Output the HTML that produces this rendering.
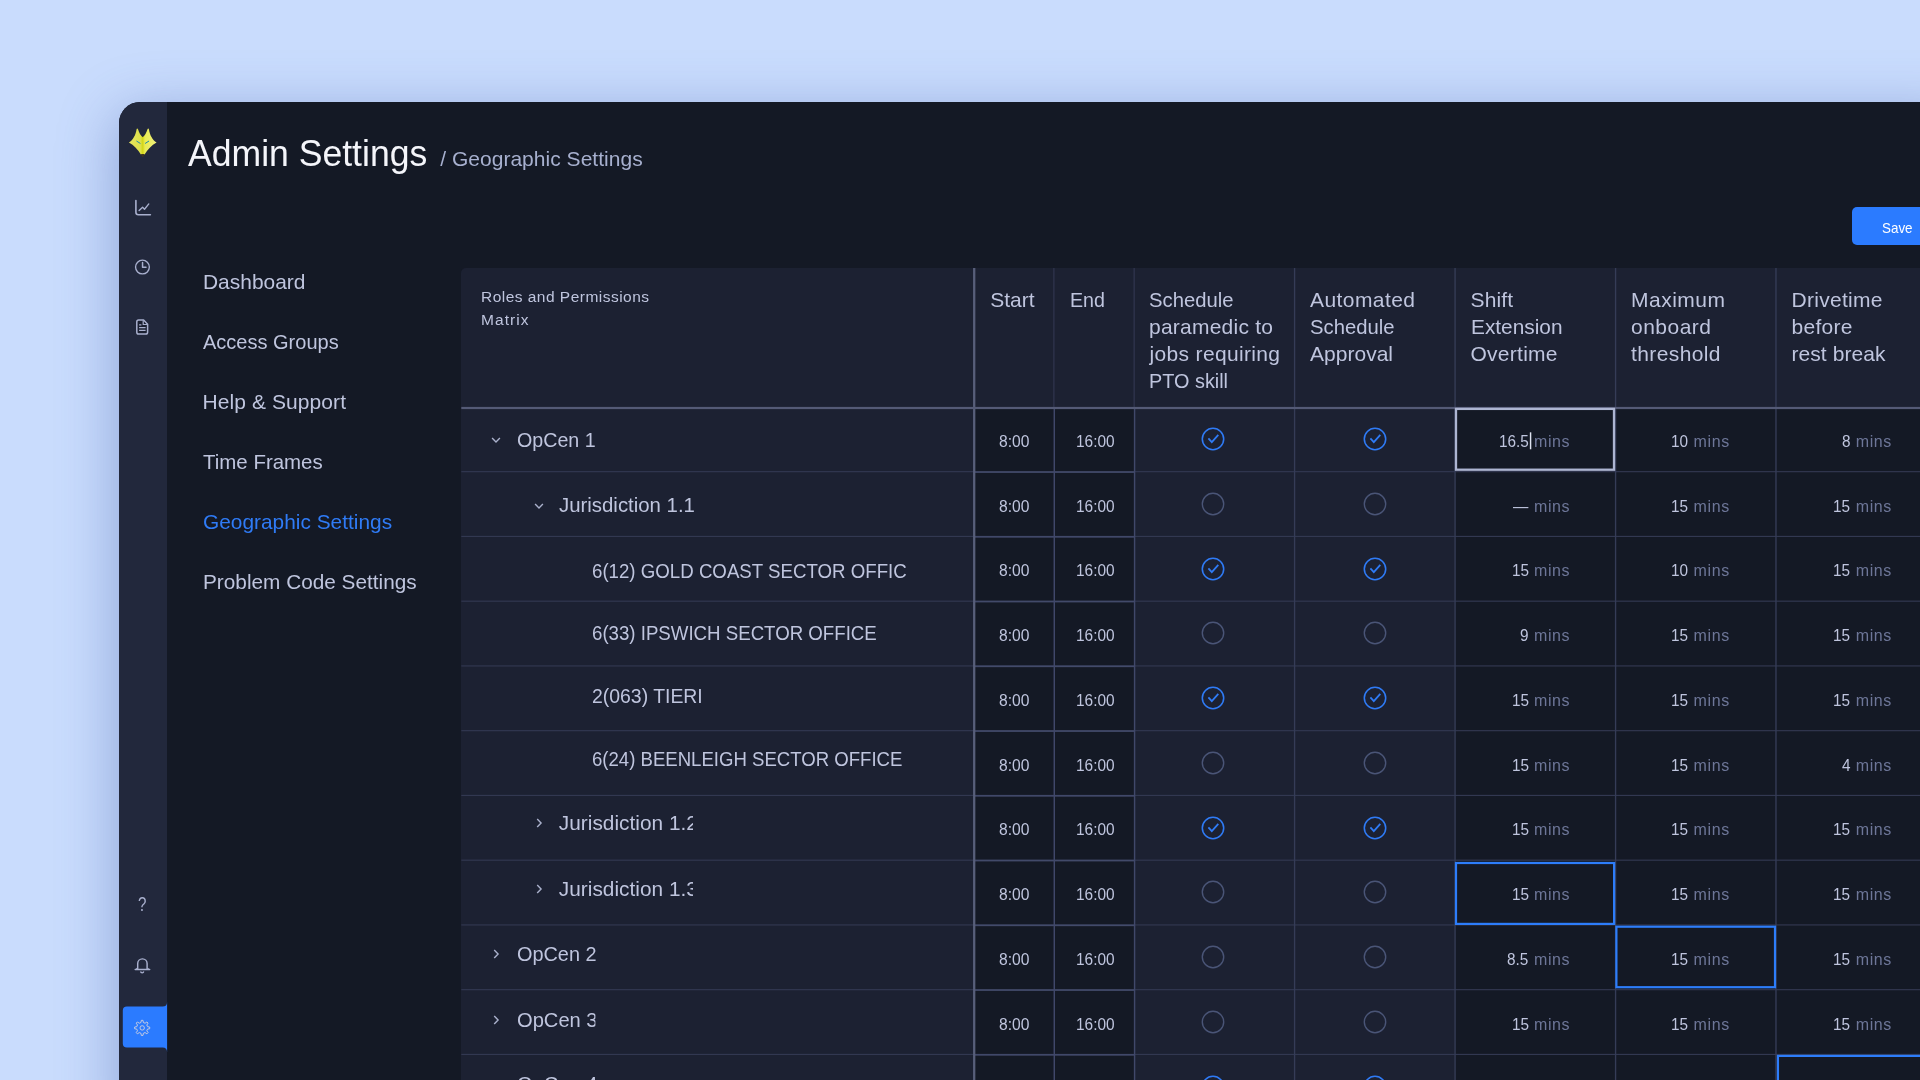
<!DOCTYPE html>
<html><head><meta charset="utf-8"><title>Admin Settings</title>
<style>
html,body{margin:0;padding:0;}
body{width:1920px;height:1080px;overflow:hidden;position:relative;background:#c9dcfd;font-family:"Liberation Sans",sans-serif;}
#root{position:absolute;left:0;top:0;width:1920px;height:1080px;overflow:hidden;will-change:transform;}
.t{position:absolute;white-space:nowrap;}
.r{position:absolute;}
.ic{position:absolute;overflow:visible;}
</style></head><body>
<div id="root">
<div class="r" style="left:119.00px;top:102.00px;width:1841.00px;height:1018.00px;background:#141925;border-radius:21px 0 0 0;box-shadow:0 14px 56px 4px rgba(66,92,170,0.40);"></div>
<div class="r" style="left:119.00px;top:102.00px;width:48.10px;height:988.00px;background:#22283c;border-radius:21px 0 0 0;"></div>
<div class="t " style="left:187.60px;top:136px;font-size:36px;line-height:36px;color:#f4f5fa;transform:scaleX(0.9882);transform-origin:0 0;">Admin Settings</div>
<div class="t " style="left:440.20px;top:148px;font-size:21px;line-height:21px;color:#a7b0cf;letter-spacing:0.027px;">/ Geographic Settings</div>
<div class="t " style="left:202.60px;top:271px;font-size:21px;line-height:21px;color:#bfc5de;transform:scaleX(0.9970);transform-origin:0 0;">Dashboard</div>
<div class="t " style="left:202.60px;top:331px;font-size:21px;line-height:21px;color:#bfc5de;transform:scaleX(0.9529);transform-origin:0 0;">Access Groups</div>
<div class="t " style="left:202.60px;top:391px;font-size:21px;line-height:21px;color:#bfc5de;letter-spacing:0.076px;">Help &amp; Support</div>
<div class="t " style="left:202.60px;top:451px;font-size:21px;line-height:21px;color:#bfc5de;transform:scaleX(0.9741);transform-origin:0 0;">Time Frames</div>
<div class="t " style="left:202.60px;top:511px;font-size:21px;line-height:21px;color:#2f7bf6;transform:scaleX(0.9936);transform-origin:0 0;">Geographic Settings</div>
<div class="t " style="left:202.60px;top:571px;font-size:21px;line-height:21px;color:#bfc5de;transform:scaleX(0.9894);transform-origin:0 0;">Problem Code Settings</div>
<div class="r" style="left:1852.00px;top:207.00px;width:80.00px;height:38.30px;background:#2b7bff;border-radius:5px;"></div>
<div class="t " style="left:1882.40px;top:221px;font-size:14.5px;line-height:14.5px;color:#ffffff;transform:scaleX(0.9251);transform-origin:0 0;">Save</div>
<div class="r" style="left:461.30px;top:268.00px;width:1468.70px;height:822.00px;background:#1c2132;border-radius:5px 0 0 0;"></div>
<div class="t " style="left:481.00px;top:289px;font-size:15.5px;line-height:15.5px;color:#bfc5de;letter-spacing:0.474px;">Roles and Permissions</div>
<div class="t " style="left:481.00px;top:312px;font-size:15.5px;line-height:15.5px;color:#bfc5de;letter-spacing:1.060px;">Matrix</div>
<div class="r" style="left:974.20px;top:408.00px;width:160.00px;height:700.00px;background:#141925;"></div>
<div class="r" style="left:1455.10px;top:408.00px;width:600.00px;height:700.00px;background:#141925;"></div>
<div class="t " style="left:990.20px;top:289px;font-size:21px;line-height:21px;color:#bfc5de;letter-spacing:0.030px;">Start</div>
<div class="t " style="left:1069.50px;top:289px;font-size:21px;line-height:21px;color:#bfc5de;transform:scaleX(0.9357);transform-origin:0 0;">End</div>
<div class="t " style="left:1149.00px;top:289px;font-size:21px;line-height:21px;color:#bfc5de;transform:scaleX(0.9645);transform-origin:0 0;">Schedule</div>
<div class="t " style="left:1149.00px;top:316px;font-size:21px;line-height:21px;color:#bfc5de;letter-spacing:0.236px;">paramedic to</div>
<div class="t " style="left:1149.57px;top:343px;font-size:21px;line-height:21px;color:#bfc5de;letter-spacing:0.334px;">jobs requiring</div>
<div class="t " style="left:1149.00px;top:370px;font-size:21px;line-height:21px;color:#bfc5de;transform:scaleX(0.9451);transform-origin:0 0;">PTO skill</div>
<div class="t " style="left:1310.00px;top:289px;font-size:21px;line-height:21px;color:#bfc5de;letter-spacing:0.431px;">Automated</div>
<div class="t " style="left:1310.00px;top:316px;font-size:21px;line-height:21px;color:#bfc5de;transform:scaleX(0.9645);transform-origin:0 0;">Schedule</div>
<div class="t " style="left:1310.00px;top:343px;font-size:21px;line-height:21px;color:#bfc5de;letter-spacing:0.021px;">Approval</div>
<div class="t " style="left:1470.50px;top:289px;font-size:21px;line-height:21px;color:#bfc5de;letter-spacing:0.125px;">Shift</div>
<div class="t " style="left:1470.50px;top:316px;font-size:21px;line-height:21px;color:#bfc5de;transform:scaleX(0.9924);transform-origin:0 0;">Extension</div>
<div class="t " style="left:1470.50px;top:343px;font-size:21px;line-height:21px;color:#bfc5de;letter-spacing:0.265px;">Overtime</div>
<div class="t " style="left:1631.00px;top:289px;font-size:21px;line-height:21px;color:#bfc5de;letter-spacing:0.505px;">Maximum</div>
<div class="t " style="left:1631.00px;top:316px;font-size:21px;line-height:21px;color:#bfc5de;letter-spacing:0.482px;">onboard</div>
<div class="t " style="left:1631.00px;top:343px;font-size:21px;line-height:21px;color:#bfc5de;letter-spacing:0.390px;">threshold</div>
<div class="t " style="left:1791.50px;top:289px;font-size:21px;line-height:21px;color:#bfc5de;letter-spacing:0.291px;">Drivetime</div>
<div class="t " style="left:1791.50px;top:316px;font-size:21px;line-height:21px;color:#bfc5de;letter-spacing:0.289px;">before</div>
<div class="t " style="left:1791.50px;top:343px;font-size:21px;line-height:21px;color:#bfc5de;letter-spacing:0.063px;">rest break</div>
<svg class="ic" style="left:0;top:0" width="1920" height="1080" viewBox="0 0 1920 1080"><rect x="461.30" y="471.10" width="1500.00" height="1.15" fill="#323851"/><rect x="974.20" y="471.30" width="160.60" height="1.60" fill="#424a6a"/><rect x="461.30" y="535.85" width="1500.00" height="1.15" fill="#323851"/><rect x="974.20" y="536.05" width="160.60" height="1.60" fill="#424a6a"/><rect x="461.30" y="600.60" width="1500.00" height="1.15" fill="#323851"/><rect x="974.20" y="600.80" width="160.60" height="1.60" fill="#424a6a"/><rect x="461.30" y="665.35" width="1500.00" height="1.15" fill="#323851"/><rect x="974.20" y="665.55" width="160.60" height="1.60" fill="#424a6a"/><rect x="461.30" y="730.10" width="1500.00" height="1.15" fill="#323851"/><rect x="974.20" y="730.30" width="160.60" height="1.60" fill="#424a6a"/><rect x="461.30" y="794.85" width="1500.00" height="1.15" fill="#323851"/><rect x="974.20" y="795.05" width="160.60" height="1.60" fill="#424a6a"/><rect x="461.30" y="859.60" width="1500.00" height="1.15" fill="#323851"/><rect x="974.20" y="859.80" width="160.60" height="1.60" fill="#424a6a"/><rect x="461.30" y="924.35" width="1500.00" height="1.15" fill="#323851"/><rect x="974.20" y="924.55" width="160.60" height="1.60" fill="#424a6a"/><rect x="461.30" y="989.10" width="1500.00" height="1.15" fill="#323851"/><rect x="974.20" y="989.30" width="160.60" height="1.60" fill="#424a6a"/><rect x="461.30" y="1053.85" width="1500.00" height="1.15" fill="#323851"/><rect x="974.20" y="1054.05" width="160.60" height="1.60" fill="#424a6a"/><rect x="461.30" y="1118.60" width="1500.00" height="1.15" fill="#323851"/><rect x="974.20" y="1118.80" width="160.60" height="1.60" fill="#424a6a"/><rect x="1293.90" y="268.00" width="1.35" height="900.00" fill="#353c57"/><rect x="1454.40" y="268.00" width="1.35" height="900.00" fill="#353c57"/><rect x="1614.90" y="268.00" width="1.35" height="900.00" fill="#353c57"/><rect x="1775.30" y="268.00" width="1.35" height="900.00" fill="#353c57"/><rect x="1053.20" y="268.00" width="1.35" height="140.00" fill="#2e344c"/><rect x="1053.55" y="408.00" width="1.45" height="900.00" fill="#40486a"/><rect x="1133.50" y="268.00" width="1.35" height="140.00" fill="#2e344c"/><rect x="1133.85" y="408.00" width="1.45" height="900.00" fill="#40486a"/><rect x="973.05" y="268.00" width="2.30" height="900.00" fill="#585f7a"/><rect x="461.30" y="406.90" width="1500.00" height="2.20" fill="#545a76"/></svg>
<!--ROWS-->
<div class="t " style="left:516.70px;top:430px;font-size:20.8px;line-height:20.8px;color:#bfc5de;transform:scaleX(0.9450);transform-origin:0 0;">OpCen 1</div>
<svg class="ic" style="left:489.90px;top:433.80px" width="12" height="12" viewBox="0 0 12 12"><path d="M2.1 4.1 L6 8.0 L9.9 4.1" fill="none" stroke="#aab1cc" stroke-width="1.4"/></svg>
<div class="t " style="left:998.90px;top:434px;font-size:16px;line-height:16px;color:#bfc5de;transform:scaleX(0.9767);transform-origin:0 0;">8:00</div>
<div class="t " style="left:1075.90px;top:434px;font-size:16px;line-height:16px;color:#bfc5de;transform:scaleX(0.9635);transform-origin:0 0;">16:00</div>
<svg class="ic" style="left:1200.95px;top:427.20px" width="24" height="24" viewBox="0 0 24 24"><circle cx="12" cy="12" r="10.7" fill="none" stroke="#2f7bf6" stroke-width="1.55"/><path d="M7.4 11.4 L10.8 15.2 L17.3 7.8" fill="none" stroke="#2f7bf6" stroke-width="1.75"/></svg>
<svg class="ic" style="left:1362.50px;top:427.20px" width="24" height="24" viewBox="0 0 24 24"><circle cx="12" cy="12" r="10.7" fill="none" stroke="#2f7bf6" stroke-width="1.55"/><path d="M7.4 11.4 L10.8 15.2 L17.3 7.8" fill="none" stroke="#2f7bf6" stroke-width="1.75"/></svg>
<div class="t " style="left:1534.00px;top:434px;font-size:16px;line-height:16px;color:#6d7698;letter-spacing:0.596px;">mins</div>
<div class="t " style="left:1499.08px;top:434px;font-size:16px;line-height:16px;color:#bfc5de;transform:scaleX(0.9580);transform-origin:0 0;">16.5</div>
<div class="t " style="left:1693.60px;top:434px;font-size:16px;line-height:16px;color:#6d7698;letter-spacing:0.596px;">mins</div>
<div class="t " style="left:1671.14px;top:434px;font-size:16px;line-height:16px;color:#bfc5de;transform:scaleX(0.9580);transform-origin:0 0;">10</div>
<div class="t " style="left:1855.80px;top:434px;font-size:16px;line-height:16px;color:#6d7698;letter-spacing:0.596px;">mins</div>
<div class="t " style="left:1841.90px;top:434px;font-size:16px;line-height:16px;color:#bfc5de;transform:scaleX(0.9580);transform-origin:0 0;">8</div>
<div class="t " style="left:559.10px;top:495px;font-size:20.8px;line-height:20.8px;color:#bfc5de;transform:scaleX(0.9800);transform-origin:0 0;">Jurisdiction 1.1</div>
<svg class="ic" style="left:533.20px;top:499.80px" width="12" height="12" viewBox="0 0 12 12"><path d="M2.1 4.1 L6 8.0 L9.9 4.1" fill="none" stroke="#aab1cc" stroke-width="1.4"/></svg>
<div class="t " style="left:998.90px;top:499px;font-size:16px;line-height:16px;color:#bfc5de;transform:scaleX(0.9767);transform-origin:0 0;">8:00</div>
<div class="t " style="left:1075.90px;top:499px;font-size:16px;line-height:16px;color:#bfc5de;transform:scaleX(0.9635);transform-origin:0 0;">16:00</div>
<svg class="ic" style="left:1200.95px;top:491.95px" width="24" height="24" viewBox="0 0 24 24"><circle cx="12" cy="12" r="10.7" fill="none" stroke="#4a5577" stroke-width="1.4"/></svg>
<svg class="ic" style="left:1362.50px;top:491.95px" width="24" height="24" viewBox="0 0 24 24"><circle cx="12" cy="12" r="10.7" fill="none" stroke="#4a5577" stroke-width="1.4"/></svg>
<div class="t " style="left:1534.00px;top:499px;font-size:16px;line-height:16px;color:#6d7698;letter-spacing:0.596px;">mins</div>
<div class="t " style="left:1513.27px;top:499px;font-size:16px;line-height:16px;color:#bfc5de;transform:scaleX(0.9580);transform-origin:0 0;">—</div>
<div class="t " style="left:1693.60px;top:499px;font-size:16px;line-height:16px;color:#6d7698;letter-spacing:0.596px;">mins</div>
<div class="t " style="left:1671.14px;top:499px;font-size:16px;line-height:16px;color:#bfc5de;transform:scaleX(0.9580);transform-origin:0 0;">15</div>
<div class="t " style="left:1855.80px;top:499px;font-size:16px;line-height:16px;color:#6d7698;letter-spacing:0.596px;">mins</div>
<div class="t " style="left:1833.34px;top:499px;font-size:16px;line-height:16px;color:#bfc5de;transform:scaleX(0.9580);transform-origin:0 0;">15</div>
<div class="t " style="left:592.20px;top:561px;font-size:20.8px;line-height:20.8px;color:#bfc5de;transform:scaleX(0.8979);transform-origin:0 0;">6(12) GOLD COAST SECTOR OFFIC</div>
<div class="t " style="left:998.90px;top:563px;font-size:16px;line-height:16px;color:#bfc5de;transform:scaleX(0.9767);transform-origin:0 0;">8:00</div>
<div class="t " style="left:1075.90px;top:563px;font-size:16px;line-height:16px;color:#bfc5de;transform:scaleX(0.9635);transform-origin:0 0;">16:00</div>
<svg class="ic" style="left:1200.95px;top:556.70px" width="24" height="24" viewBox="0 0 24 24"><circle cx="12" cy="12" r="10.7" fill="none" stroke="#2f7bf6" stroke-width="1.55"/><path d="M7.4 11.4 L10.8 15.2 L17.3 7.8" fill="none" stroke="#2f7bf6" stroke-width="1.75"/></svg>
<svg class="ic" style="left:1362.50px;top:556.70px" width="24" height="24" viewBox="0 0 24 24"><circle cx="12" cy="12" r="10.7" fill="none" stroke="#2f7bf6" stroke-width="1.55"/><path d="M7.4 11.4 L10.8 15.2 L17.3 7.8" fill="none" stroke="#2f7bf6" stroke-width="1.75"/></svg>
<div class="t " style="left:1534.00px;top:563px;font-size:16px;line-height:16px;color:#6d7698;letter-spacing:0.596px;">mins</div>
<div class="t " style="left:1511.54px;top:563px;font-size:16px;line-height:16px;color:#bfc5de;transform:scaleX(0.9580);transform-origin:0 0;">15</div>
<div class="t " style="left:1693.60px;top:563px;font-size:16px;line-height:16px;color:#6d7698;letter-spacing:0.596px;">mins</div>
<div class="t " style="left:1671.14px;top:563px;font-size:16px;line-height:16px;color:#bfc5de;transform:scaleX(0.9580);transform-origin:0 0;">10</div>
<div class="t " style="left:1855.80px;top:563px;font-size:16px;line-height:16px;color:#6d7698;letter-spacing:0.596px;">mins</div>
<div class="t " style="left:1833.34px;top:563px;font-size:16px;line-height:16px;color:#bfc5de;transform:scaleX(0.9580);transform-origin:0 0;">15</div>
<div class="t " style="left:592.20px;top:623px;font-size:20.8px;line-height:20.8px;color:#bfc5de;transform:scaleX(0.8972);transform-origin:0 0;">6(33) IPSWICH SECTOR OFFICE</div>
<div class="t " style="left:998.90px;top:628px;font-size:16px;line-height:16px;color:#bfc5de;transform:scaleX(0.9767);transform-origin:0 0;">8:00</div>
<div class="t " style="left:1075.90px;top:628px;font-size:16px;line-height:16px;color:#bfc5de;transform:scaleX(0.9635);transform-origin:0 0;">16:00</div>
<svg class="ic" style="left:1200.95px;top:621.45px" width="24" height="24" viewBox="0 0 24 24"><circle cx="12" cy="12" r="10.7" fill="none" stroke="#4a5577" stroke-width="1.4"/></svg>
<svg class="ic" style="left:1362.50px;top:621.45px" width="24" height="24" viewBox="0 0 24 24"><circle cx="12" cy="12" r="10.7" fill="none" stroke="#4a5577" stroke-width="1.4"/></svg>
<div class="t " style="left:1534.00px;top:628px;font-size:16px;line-height:16px;color:#6d7698;letter-spacing:0.596px;">mins</div>
<div class="t " style="left:1520.10px;top:628px;font-size:16px;line-height:16px;color:#bfc5de;transform:scaleX(0.9580);transform-origin:0 0;">9</div>
<div class="t " style="left:1693.60px;top:628px;font-size:16px;line-height:16px;color:#6d7698;letter-spacing:0.596px;">mins</div>
<div class="t " style="left:1671.14px;top:628px;font-size:16px;line-height:16px;color:#bfc5de;transform:scaleX(0.9580);transform-origin:0 0;">15</div>
<div class="t " style="left:1855.80px;top:628px;font-size:16px;line-height:16px;color:#6d7698;letter-spacing:0.596px;">mins</div>
<div class="t " style="left:1833.34px;top:628px;font-size:16px;line-height:16px;color:#bfc5de;transform:scaleX(0.9580);transform-origin:0 0;">15</div>
<div class="t " style="left:592.20px;top:686px;font-size:20.8px;line-height:20.8px;color:#bfc5de;transform:scaleX(0.9334);transform-origin:0 0;">2(063) TIERI</div>
<div class="t " style="left:998.90px;top:693px;font-size:16px;line-height:16px;color:#bfc5de;transform:scaleX(0.9767);transform-origin:0 0;">8:00</div>
<div class="t " style="left:1075.90px;top:693px;font-size:16px;line-height:16px;color:#bfc5de;transform:scaleX(0.9635);transform-origin:0 0;">16:00</div>
<svg class="ic" style="left:1200.95px;top:686.20px" width="24" height="24" viewBox="0 0 24 24"><circle cx="12" cy="12" r="10.7" fill="none" stroke="#2f7bf6" stroke-width="1.55"/><path d="M7.4 11.4 L10.8 15.2 L17.3 7.8" fill="none" stroke="#2f7bf6" stroke-width="1.75"/></svg>
<svg class="ic" style="left:1362.50px;top:686.20px" width="24" height="24" viewBox="0 0 24 24"><circle cx="12" cy="12" r="10.7" fill="none" stroke="#2f7bf6" stroke-width="1.55"/><path d="M7.4 11.4 L10.8 15.2 L17.3 7.8" fill="none" stroke="#2f7bf6" stroke-width="1.75"/></svg>
<div class="t " style="left:1534.00px;top:693px;font-size:16px;line-height:16px;color:#6d7698;letter-spacing:0.596px;">mins</div>
<div class="t " style="left:1511.54px;top:693px;font-size:16px;line-height:16px;color:#bfc5de;transform:scaleX(0.9580);transform-origin:0 0;">15</div>
<div class="t " style="left:1693.60px;top:693px;font-size:16px;line-height:16px;color:#6d7698;letter-spacing:0.596px;">mins</div>
<div class="t " style="left:1671.14px;top:693px;font-size:16px;line-height:16px;color:#bfc5de;transform:scaleX(0.9580);transform-origin:0 0;">15</div>
<div class="t " style="left:1855.80px;top:693px;font-size:16px;line-height:16px;color:#6d7698;letter-spacing:0.596px;">mins</div>
<div class="t " style="left:1833.34px;top:693px;font-size:16px;line-height:16px;color:#bfc5de;transform:scaleX(0.9580);transform-origin:0 0;">15</div>
<div class="t " style="left:592.20px;top:749px;font-size:20.8px;line-height:20.8px;color:#bfc5de;transform:scaleX(0.8932);transform-origin:0 0;">6(24) BEENLEIGH SECTOR OFFICE</div>
<div class="t " style="left:998.90px;top:758px;font-size:16px;line-height:16px;color:#bfc5de;transform:scaleX(0.9767);transform-origin:0 0;">8:00</div>
<div class="t " style="left:1075.90px;top:758px;font-size:16px;line-height:16px;color:#bfc5de;transform:scaleX(0.9635);transform-origin:0 0;">16:00</div>
<svg class="ic" style="left:1200.95px;top:750.95px" width="24" height="24" viewBox="0 0 24 24"><circle cx="12" cy="12" r="10.7" fill="none" stroke="#4a5577" stroke-width="1.4"/></svg>
<svg class="ic" style="left:1362.50px;top:750.95px" width="24" height="24" viewBox="0 0 24 24"><circle cx="12" cy="12" r="10.7" fill="none" stroke="#4a5577" stroke-width="1.4"/></svg>
<div class="t " style="left:1534.00px;top:758px;font-size:16px;line-height:16px;color:#6d7698;letter-spacing:0.596px;">mins</div>
<div class="t " style="left:1511.54px;top:758px;font-size:16px;line-height:16px;color:#bfc5de;transform:scaleX(0.9580);transform-origin:0 0;">15</div>
<div class="t " style="left:1693.60px;top:758px;font-size:16px;line-height:16px;color:#6d7698;letter-spacing:0.596px;">mins</div>
<div class="t " style="left:1671.14px;top:758px;font-size:16px;line-height:16px;color:#bfc5de;transform:scaleX(0.9580);transform-origin:0 0;">15</div>
<div class="t " style="left:1855.80px;top:758px;font-size:16px;line-height:16px;color:#6d7698;letter-spacing:0.596px;">mins</div>
<div class="t " style="left:1841.90px;top:758px;font-size:16px;line-height:16px;color:#bfc5de;transform:scaleX(0.9580);transform-origin:0 0;">4</div>
<div class="t " style="left:558.80px;top:813px;font-size:20.8px;line-height:20.8px;color:#bfc5de;letter-spacing:0.022px;width:134.60px;overflow:hidden;">Jurisdiction 1.2</div>
<svg class="ic" style="left:533.00px;top:817.10px" width="12" height="12" viewBox="0 0 12 12"><path d="M4.2 1.9 L8.1 6 L4.2 10.1" fill="none" stroke="#aab1cc" stroke-width="1.4"/></svg>
<div class="t " style="left:998.90px;top:822px;font-size:16px;line-height:16px;color:#bfc5de;transform:scaleX(0.9767);transform-origin:0 0;">8:00</div>
<div class="t " style="left:1075.90px;top:822px;font-size:16px;line-height:16px;color:#bfc5de;transform:scaleX(0.9635);transform-origin:0 0;">16:00</div>
<svg class="ic" style="left:1200.95px;top:815.70px" width="24" height="24" viewBox="0 0 24 24"><circle cx="12" cy="12" r="10.7" fill="none" stroke="#2f7bf6" stroke-width="1.55"/><path d="M7.4 11.4 L10.8 15.2 L17.3 7.8" fill="none" stroke="#2f7bf6" stroke-width="1.75"/></svg>
<svg class="ic" style="left:1362.50px;top:815.70px" width="24" height="24" viewBox="0 0 24 24"><circle cx="12" cy="12" r="10.7" fill="none" stroke="#2f7bf6" stroke-width="1.55"/><path d="M7.4 11.4 L10.8 15.2 L17.3 7.8" fill="none" stroke="#2f7bf6" stroke-width="1.75"/></svg>
<div class="t " style="left:1534.00px;top:822px;font-size:16px;line-height:16px;color:#6d7698;letter-spacing:0.596px;">mins</div>
<div class="t " style="left:1511.54px;top:822px;font-size:16px;line-height:16px;color:#bfc5de;transform:scaleX(0.9580);transform-origin:0 0;">15</div>
<div class="t " style="left:1693.60px;top:822px;font-size:16px;line-height:16px;color:#6d7698;letter-spacing:0.596px;">mins</div>
<div class="t " style="left:1671.14px;top:822px;font-size:16px;line-height:16px;color:#bfc5de;transform:scaleX(0.9580);transform-origin:0 0;">15</div>
<div class="t " style="left:1855.80px;top:822px;font-size:16px;line-height:16px;color:#6d7698;letter-spacing:0.596px;">mins</div>
<div class="t " style="left:1833.34px;top:822px;font-size:16px;line-height:16px;color:#bfc5de;transform:scaleX(0.9580);transform-origin:0 0;">15</div>
<div class="t " style="left:558.80px;top:879px;font-size:20.8px;line-height:20.8px;color:#bfc5de;letter-spacing:0.022px;width:134.60px;overflow:hidden;">Jurisdiction 1.3</div>
<svg class="ic" style="left:533.00px;top:882.80px" width="12" height="12" viewBox="0 0 12 12"><path d="M4.2 1.9 L8.1 6 L4.2 10.1" fill="none" stroke="#aab1cc" stroke-width="1.4"/></svg>
<div class="t " style="left:998.90px;top:887px;font-size:16px;line-height:16px;color:#bfc5de;transform:scaleX(0.9767);transform-origin:0 0;">8:00</div>
<div class="t " style="left:1075.90px;top:887px;font-size:16px;line-height:16px;color:#bfc5de;transform:scaleX(0.9635);transform-origin:0 0;">16:00</div>
<svg class="ic" style="left:1200.95px;top:880.45px" width="24" height="24" viewBox="0 0 24 24"><circle cx="12" cy="12" r="10.7" fill="none" stroke="#4a5577" stroke-width="1.4"/></svg>
<svg class="ic" style="left:1362.50px;top:880.45px" width="24" height="24" viewBox="0 0 24 24"><circle cx="12" cy="12" r="10.7" fill="none" stroke="#4a5577" stroke-width="1.4"/></svg>
<div class="t " style="left:1534.00px;top:887px;font-size:16px;line-height:16px;color:#6d7698;letter-spacing:0.596px;">mins</div>
<div class="t " style="left:1511.54px;top:887px;font-size:16px;line-height:16px;color:#bfc5de;transform:scaleX(0.9580);transform-origin:0 0;">15</div>
<div class="t " style="left:1693.60px;top:887px;font-size:16px;line-height:16px;color:#6d7698;letter-spacing:0.596px;">mins</div>
<div class="t " style="left:1671.14px;top:887px;font-size:16px;line-height:16px;color:#bfc5de;transform:scaleX(0.9580);transform-origin:0 0;">15</div>
<div class="t " style="left:1855.80px;top:887px;font-size:16px;line-height:16px;color:#6d7698;letter-spacing:0.596px;">mins</div>
<div class="t " style="left:1833.34px;top:887px;font-size:16px;line-height:16px;color:#bfc5de;transform:scaleX(0.9580);transform-origin:0 0;">15</div>
<div class="t " style="left:516.70px;top:944px;font-size:20.8px;line-height:20.8px;color:#bfc5de;transform:scaleX(0.9558);transform-origin:0 0;">OpCen 2</div>
<svg class="ic" style="left:489.60px;top:948.20px" width="12" height="12" viewBox="0 0 12 12"><path d="M4.2 1.9 L8.1 6 L4.2 10.1" fill="none" stroke="#aab1cc" stroke-width="1.4"/></svg>
<div class="t " style="left:998.90px;top:952px;font-size:16px;line-height:16px;color:#bfc5de;transform:scaleX(0.9767);transform-origin:0 0;">8:00</div>
<div class="t " style="left:1075.90px;top:952px;font-size:16px;line-height:16px;color:#bfc5de;transform:scaleX(0.9635);transform-origin:0 0;">16:00</div>
<svg class="ic" style="left:1200.95px;top:945.20px" width="24" height="24" viewBox="0 0 24 24"><circle cx="12" cy="12" r="10.7" fill="none" stroke="#4a5577" stroke-width="1.4"/></svg>
<svg class="ic" style="left:1362.50px;top:945.20px" width="24" height="24" viewBox="0 0 24 24"><circle cx="12" cy="12" r="10.7" fill="none" stroke="#4a5577" stroke-width="1.4"/></svg>
<div class="t " style="left:1534.00px;top:952px;font-size:16px;line-height:16px;color:#6d7698;letter-spacing:0.596px;">mins</div>
<div class="t " style="left:1507.28px;top:952px;font-size:16px;line-height:16px;color:#bfc5de;transform:scaleX(0.9580);transform-origin:0 0;">8.5</div>
<div class="t " style="left:1693.60px;top:952px;font-size:16px;line-height:16px;color:#6d7698;letter-spacing:0.596px;">mins</div>
<div class="t " style="left:1671.14px;top:952px;font-size:16px;line-height:16px;color:#bfc5de;transform:scaleX(0.9580);transform-origin:0 0;">15</div>
<div class="t " style="left:1855.80px;top:952px;font-size:16px;line-height:16px;color:#6d7698;letter-spacing:0.596px;">mins</div>
<div class="t " style="left:1833.34px;top:952px;font-size:16px;line-height:16px;color:#bfc5de;transform:scaleX(0.9580);transform-origin:0 0;">15</div>
<div class="t " style="left:516.70px;top:1010px;font-size:20.8px;line-height:20.8px;color:#bfc5de;transform:scaleX(0.9678);transform-origin:0 0;width:81.11px;overflow:hidden;">OpCen 3</div>
<svg class="ic" style="left:489.60px;top:1014.00px" width="12" height="12" viewBox="0 0 12 12"><path d="M4.2 1.9 L8.1 6 L4.2 10.1" fill="none" stroke="#aab1cc" stroke-width="1.4"/></svg>
<div class="t " style="left:998.90px;top:1017px;font-size:16px;line-height:16px;color:#bfc5de;transform:scaleX(0.9767);transform-origin:0 0;">8:00</div>
<div class="t " style="left:1075.90px;top:1017px;font-size:16px;line-height:16px;color:#bfc5de;transform:scaleX(0.9635);transform-origin:0 0;">16:00</div>
<svg class="ic" style="left:1200.95px;top:1009.95px" width="24" height="24" viewBox="0 0 24 24"><circle cx="12" cy="12" r="10.7" fill="none" stroke="#4a5577" stroke-width="1.4"/></svg>
<svg class="ic" style="left:1362.50px;top:1009.95px" width="24" height="24" viewBox="0 0 24 24"><circle cx="12" cy="12" r="10.7" fill="none" stroke="#4a5577" stroke-width="1.4"/></svg>
<div class="t " style="left:1534.00px;top:1017px;font-size:16px;line-height:16px;color:#6d7698;letter-spacing:0.596px;">mins</div>
<div class="t " style="left:1511.54px;top:1017px;font-size:16px;line-height:16px;color:#bfc5de;transform:scaleX(0.9580);transform-origin:0 0;">15</div>
<div class="t " style="left:1693.60px;top:1017px;font-size:16px;line-height:16px;color:#6d7698;letter-spacing:0.596px;">mins</div>
<div class="t " style="left:1671.14px;top:1017px;font-size:16px;line-height:16px;color:#bfc5de;transform:scaleX(0.9580);transform-origin:0 0;">15</div>
<div class="t " style="left:1855.80px;top:1017px;font-size:16px;line-height:16px;color:#6d7698;letter-spacing:0.596px;">mins</div>
<div class="t " style="left:1833.34px;top:1017px;font-size:16px;line-height:16px;color:#bfc5de;transform:scaleX(0.9580);transform-origin:0 0;">15</div>
<div class="t " style="left:516.70px;top:1074px;font-size:20.8px;line-height:20.8px;color:#bfc5de;transform:scaleX(0.9678);transform-origin:0 0;">OpCen 4</div>
<svg class="ic" style="left:489.60px;top:1079.00px" width="12" height="12" viewBox="0 0 12 12"><path d="M4.2 1.9 L8.1 6 L4.2 10.1" fill="none" stroke="#aab1cc" stroke-width="1.4"/></svg>
<div class="t " style="left:998.90px;top:1081px;font-size:16px;line-height:16px;color:#bfc5de;transform:scaleX(0.9767);transform-origin:0 0;">8:00</div>
<div class="t " style="left:1075.90px;top:1081px;font-size:16px;line-height:16px;color:#bfc5de;transform:scaleX(0.9635);transform-origin:0 0;">16:00</div>
<svg class="ic" style="left:1200.95px;top:1074.70px" width="24" height="24" viewBox="0 0 24 24"><circle cx="12" cy="12" r="10.7" fill="none" stroke="#2f7bf6" stroke-width="1.55"/><path d="M7.4 11.4 L10.8 15.2 L17.3 7.8" fill="none" stroke="#2f7bf6" stroke-width="1.75"/></svg>
<svg class="ic" style="left:1362.50px;top:1074.70px" width="24" height="24" viewBox="0 0 24 24"><circle cx="12" cy="12" r="10.7" fill="none" stroke="#2f7bf6" stroke-width="1.55"/><path d="M7.4 11.4 L10.8 15.2 L17.3 7.8" fill="none" stroke="#2f7bf6" stroke-width="1.75"/></svg>
<div class="t " style="left:1534.00px;top:1081px;font-size:16px;line-height:16px;color:#6d7698;letter-spacing:0.596px;">mins</div>
<div class="t " style="left:1511.54px;top:1081px;font-size:16px;line-height:16px;color:#bfc5de;transform:scaleX(0.9580);transform-origin:0 0;">15</div>
<div class="t " style="left:1693.60px;top:1081px;font-size:16px;line-height:16px;color:#6d7698;letter-spacing:0.596px;">mins</div>
<div class="t " style="left:1671.14px;top:1081px;font-size:16px;line-height:16px;color:#bfc5de;transform:scaleX(0.9580);transform-origin:0 0;">15</div>
<div class="t " style="left:1855.80px;top:1081px;font-size:16px;line-height:16px;color:#6d7698;letter-spacing:0.596px;">mins</div>
<div class="t " style="left:1833.34px;top:1081px;font-size:16px;line-height:16px;color:#bfc5de;transform:scaleX(0.9580);transform-origin:0 0;">15</div>
<svg class="ic" style="left:0;top:0" width="1920" height="1080" viewBox="0 0 1920 1080"><rect x="1456.00" y="408.90" width="158.00" height="60.80" fill="none" stroke="#adb5d2" stroke-width="2.3"/><rect x="1456.00" y="863.00" width="158.10" height="60.90" fill="none" stroke="#2d7dfa" stroke-width="2.2"/><rect x="1616.40" y="926.70" width="158.60" height="60.50" fill="none" stroke="#2d7dfa" stroke-width="2.2"/><rect x="1777.95" y="1055.90" width="158.30" height="60.80" fill="none" stroke="#2d7dfa" stroke-width="2.2"/><rect x="1529.85" y="432.3" width="1.45" height="17" fill="#dfe3f1"/></svg>
<svg class="ic" style="left:110px;top:100px" width="70" height="980" viewBox="110 100 70 980">
<defs><linearGradient id="fx" x1="0" y1="0" x2="1" y2="0"><stop offset="0" stop-color="#e6e65e"/><stop offset="0.42" stop-color="#dde04a"/><stop offset="0.5" stop-color="#d3d615"/><stop offset="0.58" stop-color="#e9ea55"/><stop offset="1" stop-color="#f0f17a"/></linearGradient></defs>
<path d="M128.9 142.4 C133.2 139.8 135.6 135.2 136.6 129.2 C136.8 128.4 137.6 128.4 138 129.2 C139.2 132.6 140.6 135.6 142.75 137.3 C144.9 135.6 146.3 132.6 147.5 129.2 C147.9 128.4 148.7 128.4 148.9 129.2 C149.9 135.2 152.3 139.8 156.6 142.4 C151.6 145.2 147.4 149.4 144.6 154.4 L140.9 154.4 C138.1 149.4 133.9 145.2 128.9 142.4 Z" fill="url(#fx)"/>
<path d="M141.0 153.9 L144.5 153.9 L143.4 156.9 L142.1 156.9 Z" fill="#3d3324"/>
<path d="M136.8 141.2 L140.1 143.3" stroke="#1f8ba6" stroke-width="1" stroke-linecap="round" fill="none"/>
<path d="M148.7 141.2 L145.4 143.3" stroke="#1f8ba6" stroke-width="1" stroke-linecap="round" fill="none"/>
<path d="M135.9 200.5 L135.9 212.2 Q135.9 214.7 138.4 214.7 L150.4 214.7" fill="none" stroke="#a9b0ce" stroke-width="1.6" stroke-linecap="round"/>
<path d="M139.1 210.6 L142.6 207.2 L144.5 209.2 L148.8 203.9" fill="none" stroke="#a9b0ce" stroke-width="1.35" stroke-linecap="round" stroke-linejoin="round"/>
<circle cx="142.45" cy="267.05" r="6.9" fill="none" stroke="#a9b0ce" stroke-width="1.35"/>
<path d="M142.55 262.6 L142.55 267.3 L146.0 267.3" fill="none" stroke="#a9b0ce" stroke-width="1.5" stroke-linecap="round" stroke-linejoin="round"/>
<path d="M138.6 320.1 L143.6 320.1 L147.6 324.2 L147.6 332.2 Q147.6 334 145.8 334 L138.6 334 Q136.8 334 136.8 332.2 L136.8 321.9 Q136.8 320.1 138.6 320.1 Z" fill="#1b2031" stroke="#a9b0ce" stroke-width="1.5" stroke-linejoin="round"/>
<path d="M143.2 320.4 L143.2 324.5 L147.4 324.5" fill="none" stroke="#a9b0ce" stroke-width="1.2"/>
<path d="M139.1 324.9 L141.4 324.9 M139.1 327.6 L145.6 327.6 M139.1 330.4 L145.6 330.4" fill="none" stroke="#a9b0ce" stroke-width="1.2"/>
<path d="M135.2 969.4 L149.7 969.4 M137.7 969.2 L137.7 963.6 A4.7 4.7 0 0 1 147.1 963.6 L147.1 969.2" fill="none" stroke="#a9b0ce" stroke-width="1.45" stroke-linecap="round"/>
<path d="M135.0 969.7 L137.2 967.6 L137.2 969.7 Z M149.9 969.7 L147.6 967.6 L147.6 969.7 Z" fill="#a9b0ce"/>
<path d="M140.5 971.5 A1.7 1.7 0 0 0 143.8 971.5" fill="none" stroke="#a9b0ce" stroke-width="1.3"/>
<path d="M126.9 1006.6 L162.6 1006.6 Q167.1 1006.5 167.1 1001.9 L167.1 1052.2 Q167.1 1047.6 162.6 1047.5 L126.9 1047.5 Q122.8 1047.5 122.8 1043.4 L122.8 1010.6 Q122.8 1006.5 126.9 1006.5 Z" fill="#2b7bff"/>
<path d="M140.91 1022.54 L141.32 1020.35 L142.98 1020.35 L143.39 1022.54 L145.06 1023.23 L146.90 1021.97 L148.08 1023.15 L146.82 1024.99 L147.51 1026.66 L149.70 1027.07 L149.70 1028.73 L147.51 1029.14 L146.82 1030.81 L148.08 1032.65 L146.90 1033.83 L145.06 1032.57 L143.39 1033.26 L142.98 1035.45 L141.32 1035.45 L140.91 1033.26 L139.24 1032.57 L137.40 1033.83 L136.22 1032.65 L137.48 1030.81 L136.79 1029.14 L134.60 1028.73 L134.60 1027.07 L136.79 1026.66 L137.48 1024.99 L136.22 1023.15 L137.40 1021.97 L139.24 1023.23Z" fill="none" stroke="#c4cbe2" stroke-width="1.0" stroke-linejoin="round"/>
<circle cx="142.2" cy="1027.9" r="2.2" fill="none" stroke="#c4cbe2" stroke-width="1.0"/>
</svg>
<div class="t " style="left:137.90px;top:894px;font-size:20.5px;line-height:20.5px;color:#a9b0ce;transform:scaleX(0.7387);transform-origin:0 0;">?</div>
</div>
</body></html>
